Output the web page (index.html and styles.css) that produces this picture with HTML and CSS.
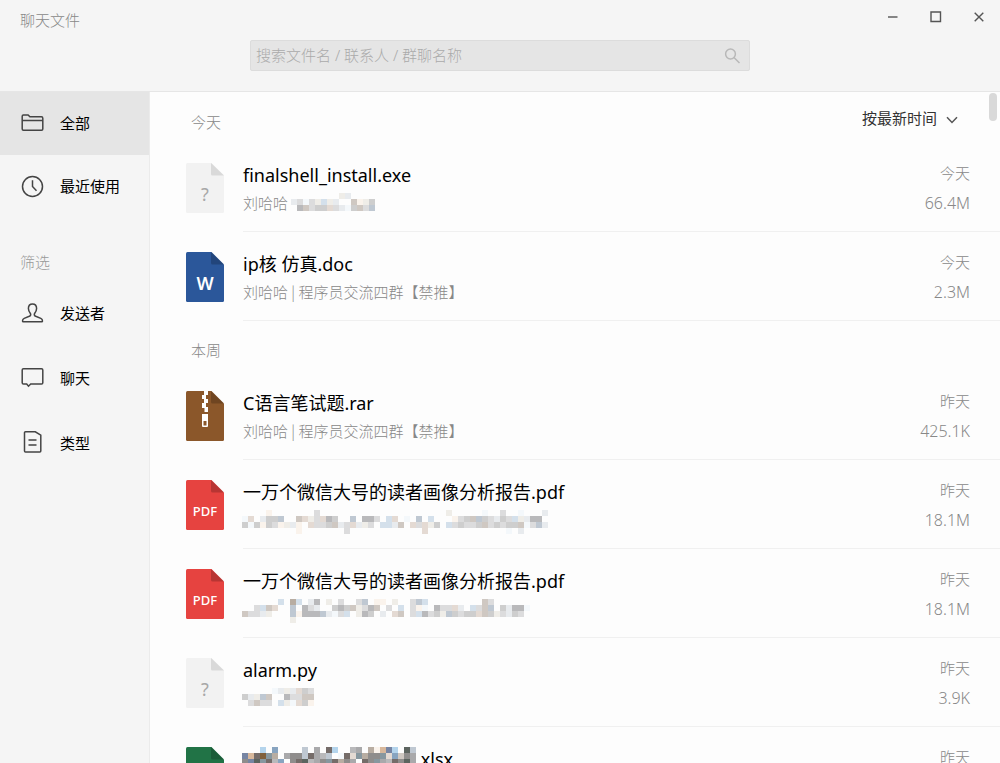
FILE: index.html
```html
<!DOCTYPE html>
<html lang="zh-CN">
<head>
<meta charset="utf-8">
<meta name="viewport" content="width=device-width, initial-scale=1">
<title>聊天文件</title>
<link rel="stylesheet" href="styles.css">
</head>
<body>
<svg class="defs" aria-hidden="true">
  <symbol id="sheet" viewBox="0 0 38 50">
    <path d="M1.500 0H25.500L38 12.500V48.500Q38 50 36.500 50H1.500Q0 50 0 48.500V1.500Q0 0 1.500 0Z" fill="currentColor"/>
  </symbol>
</svg>
<div class="window">
  <header class="top">
    <div class="titlebar">
      <h1 class="title">聊天文件</h1>
      <div class="controls">
        <button type="button" class="control" aria-label="最小化"><svg width="12" height="12" viewBox="0 0 12 12"><path d="M1 6H10.500"/></svg></button>
        <button type="button" class="control" aria-label="最大化"><svg width="12" height="12" viewBox="0 0 12 12"><path d="M1 1H10.500V10.500H1Z"/></svg></button>
        <button type="button" class="control" aria-label="关闭"><svg width="12" height="12" viewBox="0 0 12 12"><path d="M1.700 1.700L10.300 10.300M10.300 1.700L1.700 10.300"/></svg></button>
      </div>
    </div>
    <form class="search">
      <input class="search-input" type="text" aria-label="搜索" placeholder="搜索文件名 / 联系人 / 群聊名称">
      <svg class="search-icon" width="16" height="16" viewBox="0 0 16 16"><circle cx="6.500" cy="6" r="4.900"/><path d="M10 9.500L15.500 15"/></svg>
    </form>
  </header>

  <div class="body">
    <nav class="sidebar">
      <a class="nav-item selected" href="#all">
        <svg class="nav-icon" viewBox="0 0 24 24"><path d="M1.200 5.200Q1.200 4 2.400 4H7.100L8.900 5.800H20.400Q21.800 5.800 21.800 7.200V18Q21.800 19.200 20.600 19.200H2.400Q1.200 19.200 1.200 18ZM1.200 9.600H21.800"/></svg>
        <span>全部</span>
      </a>
      <a class="nav-item" href="#recent">
        <svg class="nav-icon" viewBox="0 0 24 24"><circle cx="11.500" cy="12.500" r="10"/><path d="M11.500 6.200V12.500L15.500 16.700"/></svg>
        <span>最近使用</span>
      </a>
      <h2 class="nav-label">筛选</h2>
      <a class="nav-item filter" href="#sender">
        <svg class="nav-icon" viewBox="0 0 24 24"><path d="M11.500 2.900C8.900 2.900 7.400 4.800 7.400 7.600C7.400 9.700 8.400 11.200 9.400 12.500C10.100 13.700 9.600 14.700 8.300 15.300L3.200 17.400C1.800 18 1.500 18.900 1.500 19.900Q1.500 20.700 2.300 20.700H20.700Q21.500 20.700 21.500 19.900C21.500 18.900 21.200 18 19.800 17.400L14.700 15.300C13.400 14.700 12.900 13.700 13.600 12.500C14.600 11.200 15.600 9.700 15.600 7.600C15.600 4.800 14.100 2.900 11.500 2.900Z"/></svg>
        <span>发送者</span>
      </a>
      <a class="nav-item filter" href="#chat">
        <svg class="nav-icon" viewBox="0 0 24 24"><path d="M2.500 2.700H20.500Q21.800 2.700 21.800 4V16.700Q21.800 18 20.500 18H9.700L7.500 20.200L5.700 18H2.500Q1.200 18 1.200 16.700V4Q1.200 2.700 2.500 2.700Z"/></svg>
        <span>聊天</span>
      </a>
      <a class="nav-item filter" href="#type">
        <svg class="nav-icon" viewBox="0 0 24 24"><path d="M4.500 .8H14.300L19.800 4.200V19.900Q19.800 20.900 18.800 20.900H4.500Q3.500 20.900 3.500 19.900V1.800Q3.500 .8 4.500 .8ZM7.500 9H15.500M7.500 14H15.500"/></svg>
        <span>类型</span>
      </a>
    </nav>

    <main class="files">
      <section>
        <div class="group">
          <h2 class="group-name">今天</h2>
          <label class="sort">
            <select class="sort-select" aria-label="排序"><option>按最新时间</option></select>
            <svg class="chevron" width="12" height="8" viewBox="0 0 12 8"><path d="M1 1.200L6 6.400L11 1.200"/></svg>
          </label>
        </div>
        <ul class="list">
          <li class="file">
            <svg class="doc unknown" viewBox="0 0 38 50"><use href="#sheet"/><path class="fold" d="M25 0L38 12.500H26.500Q25 12.500 25 11Z"/><text class="mark" x="19" y="38">?</text></svg>
            <div class="entry">
              <div class="info"><p class="name">finalshell_install.exe</p><p class="from">刘哈哈<svg class="mosaic inline" data-rows="........kc....|ceaekhkc..jbkf|.gjeffdecafjei"></svg></p></div>
              <div class="meta"><time>今天</time><span>66.4M</span></div>
            </div>
          </li>
          <li class="file">
            <svg class="doc word" viewBox="0 0 38 50"><use href="#sheet"/><path class="fold" d="M25 0L38 12.500H26.500Q25 12.500 25 11Z"/><text class="mark bold" x="19" y="38">W</text></svg>
            <div class="entry">
              <div class="info"><p class="name">ip核 仿真.doc</p><p class="from">刘哈哈 | 程序员交流四群【禁推】</p></div>
              <div class="meta"><time>今天</time><span>2.3M</span></div>
            </div>
          </li>
        </ul>
      </section>
      <section>
        <div class="group"><h2 class="group-name">本周</h2></div>
        <ul class="list">
          <li class="file">
            <svg class="doc archive" viewBox="0 0 38 50"><use href="#sheet"/><path class="fold" d="M25 0L38 12.500H26.500Q25 12.500 25 11Z"/><path class="zip" fill-rule="evenodd" d="M18 0H22V4H20V8H22V12H20V16H22V21H18.500V17H16V12H18V8H16V4H18ZM16 23H22V35Q22 36 21 36H17Q16 36 16 35ZM17.500 30V34.500H20.500V30Z"/></svg>
            <div class="entry">
              <div class="info"><p class="name">C语言笔试题.rar</p><p class="from">刘哈哈 | 程序员交流四群【禁推】</p></div>
              <div class="meta"><time>昨天</time><span>425.1K</span></div>
            </div>
          </li>
          <li class="file">
            <svg class="doc pdf" viewBox="0 0 38 50"><use href="#sheet"/><path class="fold" d="M25 0L38 12.500H26.500Q25 12.500 25 11Z"/><text class="mark small" x="19" y="36">PDF</text></svg>
            <div class="entry">
              <div class="info"><p class="name">一万个微信大号的读者画像分析报告.pdf</p><p class="from"><svg class="mosaic" data-rows="....b.......e.....................k.....a..e..a...c|ad.cffi..jdkedgf..i.gge.hd.a.i.h...befjifecfehkcgg|fafbfebkcb.deefjcedcke.hhcj.dedkf.hefeefjefeffjaeic|.........b.......e............d.............a.c"></svg></p></div>
              <div class="meta"><time>昨天</time><span>18.1M</span></div>
            </div>
          </li>
          <li class="file">
            <svg class="doc pdf" viewBox="0 0 38 50"><use href="#sheet"/><path class="fold" d="M25 0L38 12.500H26.500Q25 12.500 25 11Z"/><text class="mark small" x="19" y="36">PDF</text></svg>
            <div class="entry">
              <div class="info"><p class="name">一万个微信大号的读者画像分析报告.pdf</p><p class="from"><svg class="mosaic" data-rows="......h.wh.cg.k.e..ei.bb.k..eih.........je|..ehjd..i.gec..fgfjkegj.e.h.eba.geedc.heji.fcgga|jeeck...ibgggicaeh.kgf.c.dj.ehgefkifeffdjfkecfe|........k"></svg></p></div>
              <div class="meta"><time>昨天</time><span>18.1M</span></div>
            </div>
          </li>
          <li class="file">
            <svg class="doc unknown" viewBox="0 0 38 50"><use href="#sheet"/><path class="fold" d="M25 0L38 12.500H26.500Q25 12.500 25 11Z"/><text class="mark" x="19" y="38">?</text></svg>
            <div class="entry">
              <div class="info"><p class="name">alarm.py</p><p class="from"><svg class="mosaic" data-rows=".....ackcdfe|fckij..geejj|.ejee.hkadfb"></svg></p></div>
              <div class="meta"><time>昨天</time><span>3.9K</span></div>
            </div>
          </li>
          <li class="file">
            <svg class="doc excel" viewBox="0 0 38 50"><use href="#sheet"/><path class="fold" d="M25 0L38 12.500H26.500Q25 12.500 25 11Z"/></svg>
            <div class="entry">
              <div class="info"><p class="name"><svg class="mosaic" data-rows="...t.s....i.o.mt..go.wbrpt.ui|prmqvw.onnimogi.amdvwnnvdsjno|npuvmgs.nmugonvmwno.mnvogmnuo"></svg>.xlsx</p></div>
              <div class="meta"><time>昨天</time></div>
            </div>
          </li>
        </ul>
      </section>
    </main>
    <div class="thumb"></div>
  </div>
</div>
<script src="mosaic.js"></script>
</body>
</html>
```
FILE: styles.css
```css
* {
  box-sizing: border-box;
  margin: 0;
  padding: 0;
}

body {
  font-family: "Noto Sans", "Noto Sans CJK SC", sans-serif;
  font-size: 15px;
  line-height: 24px;
  color: #000;
  background: #f5f5f5;
}

h1, h2 {
  font-size: 15px;
  font-weight: 300;
}

button, input, select {
  font: inherit;
  border: 0;
  background: none;
}

.defs {
  display: none;
}

.window {
  display: flex;
  flex-direction: column;
  height: 100vh;
  overflow: hidden;
}

/* Title bar and search */
.top {
  flex: none;
  padding-bottom: 20px;
  border-bottom: 1px solid #e6e6e6;
}

.titlebar {
  display: flex;
  justify-content: space-between;
  height: 40px;
}

.title {
  padding: 8px 20px;
  color: #888;
}

.controls {
  display: flex;
}

.control {
  display: flex;
  align-items: center;
  justify-content: center;
  width: 43px;
  height: 34px;
}

.control svg {
  fill: none;
  stroke: #555;
  stroke-width: 1.4;
}

.search {
  display: flex;
  align-items: center;
  width: 50%;
  height: 31px;
  margin: 0 auto;
  padding: 0 9px 0 5px;
  background: #e5e5e5;
  border: 1px solid #dcdcdc;
  border-radius: 2px;
}

.search-input {
  flex: 1;
  min-width: 0;
  padding-bottom: 2px;
  outline: 0;
  font-weight: 300;
}

.search-input::placeholder {
  color: #aaa;
}

.search-icon {
  fill: none;
  stroke: #b8b8b8;
  stroke-width: 1.5;
}

/* Sidebar */
.body {
  position: relative;
  display: flex;
  flex: 1;
  min-height: 0;
}

.sidebar {
  flex: none;
  width: 150px;
  border-right: 1px solid #ebebeb;
}

.nav-item {
  display: flex;
  align-items: center;
  gap: 15px;
  height: 63px;
  padding: 0 0 2px 21px;
  color: #000;
  text-decoration: none;
}

.nav-item.filter {
  height: 65px;
}

.nav-item.selected {
  background: #e5e5e5;
}

.nav-icon {
  width: 24px;
  height: 24px;
  fill: none;
  stroke: #444;
  stroke-width: 1.5;
}

.nav-label {
  padding: 32px 20px 7px;
  color: #999;
}

/* File list */
.files {
  flex: 1;
  min-width: 0;
  overflow: hidden;
  padding-top: 1px;
  background: #fdfdfd;
}

.group {
  display: flex;
  align-items: center;
  justify-content: space-between;
  height: 50px;
  padding: 0 42px 0 41px;
}

.group-name {
  padding-top: 8px;
  color: #888;
}

.sort {
  display: flex;
  align-items: center;
  gap: 8px;
}

.sort-select {
  appearance: none;
  color: #333;
}

.chevron {
  margin-top: 4px;
  fill: none;
  stroke: #555;
  stroke-width: 1.5;
}

.list {
  list-style: none;
}

.file {
  display: flex;
  gap: 19px;
  padding-left: 36px;
}

.entry {
  display: flex;
  flex: 1;
  justify-content: space-between;
  min-width: 0;
  height: 89px;
  padding: 18px 30px 0 0;
  border-bottom: 1px solid #f0f0f0;
}

.info {
  min-width: 0;
}

.name {
  height: 30px;
  font-size: 18px;
  line-height: 28px;
  white-space: nowrap;
}

.from {
  height: 24px;
  font-family: "Noto Sans CJK SC", sans-serif;
  font-weight: 300;
  color: #888;
  white-space: nowrap;
}

.meta {
  display: flex;
  flex-direction: column;
  gap: 6px;
  text-align: right;
  font-size: 16px;
  font-weight: 300;
  color: #888;
}

.meta time {
  font-size: 15px;
}

.mosaic {
  margin: 2px 0 0 -1px;
  vertical-align: top;
}

.mosaic.inline {
  margin-left: 3px;
}

.doc {
  flex: none;
  width: 38px;
  height: 50px;
  margin-top: 20px;
}

.fold {
  fill: #000;
  fill-opacity: 0.2;
}

.mark {
  fill: #fff;
  font-size: 18px;
  text-anchor: middle;
}

.mark.bold {
  font-weight: 600;
}

.mark.small {
  font-size: 13px;
  font-weight: 500;
}

.zip {
  fill: #fff;
}

.unknown {
  color: #f2f2f2;
}

.unknown .fold {
  fill: #d9d9d9;
  fill-opacity: 1;
}

.unknown .mark {
  fill: #a8a8a8;
}

.word {
  color: #2b579a;
}

.archive {
  color: #8b572a;
}

.pdf {
  color: #e64340;
}

.excel {
  color: #217346;
}

.thumb {
  position: absolute;
  top: 1px;
  right: 3px;
  width: 8px;
  height: 28px;
  border-radius: 4px;
  background: #d9d9d9;
}
```
FILE: mosaic.js
```js
// Draws masked names as grids of coloured squares; each letter is one cell.
const CELL = 6;
const COLORS = {
  a: "#f4f8fb", b: "#faf3ec", c: "#e8ebee", d: "#e4dad3", e: "#dcdcdd",
  f: "#cecece", g: "#b9b9bb", h: "#d4e0eb", i: "#bfc8d2", j: "#cfc8c2",
  k: "#efede8", m: "#756c69", n: "#8f8d8c", o: "#a9a9ab", p: "#7785a3",
  q: "#80603c", r: "#d8b89c", s: "#88a4c0", t: "#b4d4ec", u: "#5c645f",
  v: "#87979f", w: "#b8ada2"
};
for (const svg of document.querySelectorAll(".mosaic")) {
  const rows = svg.dataset.rows.split("|");
  const columns = Math.max(...rows.map(row => row.length));
  svg.setAttribute("width", columns * CELL);
  svg.setAttribute("height", rows.length * CELL);
  svg.setAttribute("shape-rendering", "crispEdges");
  svg.innerHTML = rows.map((row, y) => [...row].map((key, x) =>
    COLORS[key] ? `<rect x="${x * CELL}" y="${y * CELL}" width="${CELL}" height="${CELL}" fill="${COLORS[key]}"/>` : ""
  ).join("")).join("");
}
```
